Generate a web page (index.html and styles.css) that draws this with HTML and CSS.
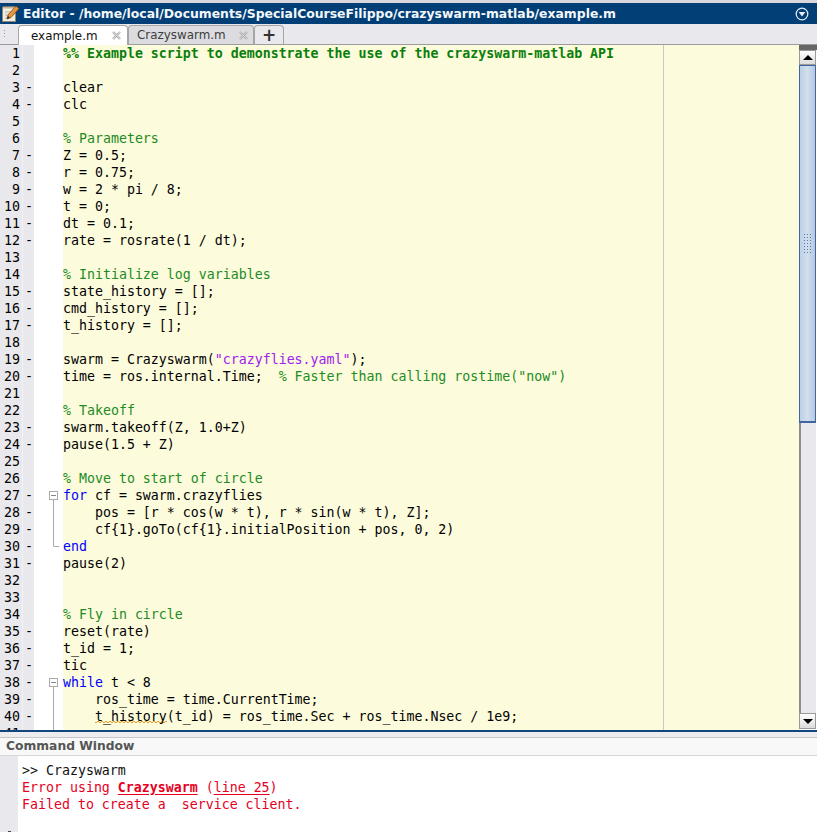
FILE: index.html
```html
<!DOCTYPE html>
<html lang="en">
<head>
<meta charset="utf-8">
<title>Editor</title>
<link rel="stylesheet" href="styles.css">
</head>
<body>
<div class="window">
  <header class="titlebar">
    <svg class="app-icon" width="17" height="19" viewBox="0 0 17 19"><rect x=".5" y="3.5" width="13" height="14" fill="#f1ede0" stroke="#8f8778"/><path d="M1 3.5h12" stroke="#c9b48c" stroke-width="2"/><path d="M3 8h6M3 11h4M3 14h3" stroke="#b5ad98"/><path d="M5 15l1-4 8-9 3 2.500-8 9z" fill="#e9963c" stroke="#6e4520" stroke-width=".8"/><path d="M5 15l1-3 2 1.600z" fill="#3a2a18"/></svg>
    <span class="title-text">Editor - /home/local/Documents/SpecialCourseFilippo/crazyswarm-matlab/example.m</span>
    <svg class="title-menu" width="14" height="14" viewBox="0 0 14 14"><circle cx="7" cy="7" r="5.800" fill="none" stroke="#e8eef5" stroke-width="1.200"/><path d="M3.600 5h6.800L7 9.600z" fill="#e8eef5"/></svg>
  </header>
  <nav class="tabbar">
    <span class="grip"></span>
    <div class="tab active"><span class="tab-label">example.m</span><svg class="tab-close" width="9" height="9" viewBox="0 0 9 9"><path d="M1 1l7 7M8 1L1 8" stroke="#aeaeae" stroke-width="2.400"/><path d="M1 1l7 7M8 1L1 8" stroke="#ececec" stroke-width=".7"/></svg></div>
    <div class="tab second"><span class="tab-label">Crazyswarm.m</span><svg class="tab-close" width="9" height="9" viewBox="0 0 9 9"><path d="M1 1l7 7M8 1L1 8" stroke="#aeaeae" stroke-width="2.400"/><path d="M1 1l7 7M8 1L1 8" stroke="#e4e4e4" stroke-width=".7"/></svg></div>
    <div class="tab add">+</div>
  </nav>
  <main class="editor">
    <div class="lines">
      <div class="line"><span class="num">1</span><span class="dash"></span><span class="fold"></span><span class="code cm-b">%% Example script to demonstrate the use of the crazyswarm-matlab API</span></div>
      <div class="line"><span class="num">2</span><span class="dash"></span><span class="fold"></span><span class="code"></span></div>
      <div class="line"><span class="num">3</span><span class="dash">-</span><span class="fold"></span><span class="code">clear</span></div>
      <div class="line"><span class="num">4</span><span class="dash">-</span><span class="fold"></span><span class="code">clc</span></div>
      <div class="line"><span class="num">5</span><span class="dash"></span><span class="fold"></span><span class="code"></span></div>
      <div class="line"><span class="num">6</span><span class="dash"></span><span class="fold"></span><span class="code cm">% Parameters</span></div>
      <div class="line"><span class="num">7</span><span class="dash">-</span><span class="fold"></span><span class="code">Z = 0.5;</span></div>
      <div class="line"><span class="num">8</span><span class="dash">-</span><span class="fold"></span><span class="code">r = 0.75;</span></div>
      <div class="line"><span class="num">9</span><span class="dash">-</span><span class="fold"></span><span class="code">w = 2 * pi / 8;</span></div>
      <div class="line"><span class="num">10</span><span class="dash">-</span><span class="fold"></span><span class="code">t = 0;</span></div>
      <div class="line"><span class="num">11</span><span class="dash">-</span><span class="fold"></span><span class="code">dt = 0.1;</span></div>
      <div class="line"><span class="num">12</span><span class="dash">-</span><span class="fold"></span><span class="code">rate = rosrate(1 / dt);</span></div>
      <div class="line"><span class="num">13</span><span class="dash"></span><span class="fold"></span><span class="code"></span></div>
      <div class="line"><span class="num">14</span><span class="dash"></span><span class="fold"></span><span class="code cm">% Initialize log variables</span></div>
      <div class="line"><span class="num">15</span><span class="dash">-</span><span class="fold"></span><span class="code">state_history = [];</span></div>
      <div class="line"><span class="num">16</span><span class="dash">-</span><span class="fold"></span><span class="code">cmd_history = [];</span></div>
      <div class="line"><span class="num">17</span><span class="dash">-</span><span class="fold"></span><span class="code">t_history = [];</span></div>
      <div class="line"><span class="num">18</span><span class="dash"></span><span class="fold"></span><span class="code"></span></div>
      <div class="line"><span class="num">19</span><span class="dash">-</span><span class="fold"></span><span class="code">swarm = Crazyswarm(<span class="str">"crazyflies.yaml"</span>);</span></div>
      <div class="line"><span class="num">20</span><span class="dash">-</span><span class="fold"></span><span class="code">time = ros.internal.Time;  <span class="cm">% Faster than calling rostime("now")</span></span></div>
      <div class="line"><span class="num">21</span><span class="dash"></span><span class="fold"></span><span class="code"></span></div>
      <div class="line"><span class="num">22</span><span class="dash"></span><span class="fold"></span><span class="code cm">% Takeoff</span></div>
      <div class="line"><span class="num">23</span><span class="dash">-</span><span class="fold"></span><span class="code">swarm.takeoff(Z, 1.0+Z)</span></div>
      <div class="line"><span class="num">24</span><span class="dash">-</span><span class="fold"></span><span class="code">pause(1.5 + Z)</span></div>
      <div class="line"><span class="num">25</span><span class="dash"></span><span class="fold"></span><span class="code"></span></div>
      <div class="line"><span class="num">26</span><span class="dash"></span><span class="fold"></span><span class="code cm">% Move to start of circle</span></div>
      <div class="line"><span class="num">27</span><span class="dash">-</span><span class="fold"><svg class="fold-mark" width="29" height="17" viewBox="0 0 29 17"><path d="M19.500 12.500V17" stroke="#aaa" fill="none"/><rect x="15.500" y="4.500" width="8" height="8" fill="#fff" stroke="#aaa"/><path d="M17 8.500h5" stroke="#888"/></svg></span><span class="code"><span class="kw">for</span> cf = swarm.crazyflies</span></div>
      <div class="line"><span class="num">28</span><span class="dash">-</span><span class="fold"><svg class="fold-mark" width="29" height="17" viewBox="0 0 29 17"><path d="M19.500 0V17" stroke="#aaa" fill="none"/></svg></span><span class="code">    pos = [r * cos(w * t), r * sin(w * t), Z];</span></div>
      <div class="line"><span class="num">29</span><span class="dash">-</span><span class="fold"><svg class="fold-mark" width="29" height="17" viewBox="0 0 29 17"><path d="M19.500 0V17" stroke="#aaa" fill="none"/></svg></span><span class="code">    cf{1}.goTo(cf{1}.initialPosition + pos, 0, 2)</span></div>
      <div class="line"><span class="num">30</span><span class="dash">-</span><span class="fold"><svg class="fold-mark" width="29" height="17" viewBox="0 0 29 17"><path d="M19.500 0V8.500H25" stroke="#aaa" fill="none"/></svg></span><span class="code"><span class="kw">end</span></span></div>
      <div class="line"><span class="num">31</span><span class="dash">-</span><span class="fold"></span><span class="code">pause(2)</span></div>
      <div class="line"><span class="num">32</span><span class="dash"></span><span class="fold"></span><span class="code"></span></div>
      <div class="line"><span class="num">33</span><span class="dash"></span><span class="fold"></span><span class="code"></span></div>
      <div class="line"><span class="num">34</span><span class="dash"></span><span class="fold"></span><span class="code cm">% Fly in circle</span></div>
      <div class="line"><span class="num">35</span><span class="dash">-</span><span class="fold"></span><span class="code">reset(rate)</span></div>
      <div class="line"><span class="num">36</span><span class="dash">-</span><span class="fold"></span><span class="code">t_id = 1;</span></div>
      <div class="line"><span class="num">37</span><span class="dash">-</span><span class="fold"></span><span class="code">tic</span></div>
      <div class="line"><span class="num">38</span><span class="dash">-</span><span class="fold"><svg class="fold-mark" width="29" height="17" viewBox="0 0 29 17"><path d="M19.500 12.500V17" stroke="#aaa" fill="none"/><rect x="15.500" y="4.500" width="8" height="8" fill="#fff" stroke="#aaa"/><path d="M17 8.500h5" stroke="#888"/></svg></span><span class="code"><span class="kw">while</span> t &lt; 8</span></div>
      <div class="line"><span class="num">39</span><span class="dash">-</span><span class="fold"><svg class="fold-mark" width="29" height="17" viewBox="0 0 29 17"><path d="M19.500 0V17" stroke="#aaa" fill="none"/></svg></span><span class="code">    ros_time = time.CurrentTime;</span></div>
      <div class="line"><span class="num">40</span><span class="dash">-</span><span class="fold"><svg class="fold-mark" width="29" height="17" viewBox="0 0 29 17"><path d="M19.500 0V17" stroke="#aaa" fill="none"/></svg></span><span class="code">    <span class="warn">t_history</span>(t_id) = ros_time.Sec + ros_time.Nsec / 1e9;</span></div>
      <div class="line partial"><span class="num">41</span><span class="dash">-</span><span class="fold"><svg class="fold-mark" width="29" height="17" viewBox="0 0 29 17"><path d="M19.500 0V17" stroke="#aaa" fill="none"/></svg></span><span class="code"></span></div>
    </div>
    <aside class="scrollbar">
      <div class="sb-cap"></div>
      <div class="sb-btn"><span class="arrow up"></span></div>
      <div class="sb-thumb"><span class="sb-grip"></span></div>
      <div class="sb-track"></div>
      <div class="sb-btn bottom"><span class="arrow down"></span></div>
    </aside>
  </main>
  <section class="command">
    <div class="cmd-strip"></div>
    <div class="cmd-head">Command Window</div>
    <div class="cmd-body">
      <div class="cmd-gutter"><span class="cmd-mark"></span></div>
      <div class="cmd-text">
        <div class="cmd-line">&gt;&gt; Crazyswarm</div>
        <div class="cmd-line err">Error using <a class="err-link">Crazyswarm</a> (<span class="err-under">line 25</span>)</div>
        <div class="cmd-line err">Failed to create a  service client.</div>
      </div>
    </div>
  </section>
</div>
</body>
</html>
```

FILE: styles.css
```css
* { box-sizing: border-box; }
html, body { margin: 0; padding: 0; }
body { width: 817px; height: 832px; overflow: hidden; background: #fff; }
.window { display: flex; flex-direction: column; height: 832px; font-family: "DejaVu Sans", sans-serif; }

.titlebar { height: 24px; flex: none; display: flex; align-items: center; padding: 0 8px 0 2px; background: #023f76; border-top: 3px solid #d9d8dc; gap: 4px; }
.app-icon { flex: none; }
.title-text { flex: 1; font-size: 12.4px; font-weight: 700; color: #f4f7fa; white-space: pre; }
.title-menu { flex: none; }

.tabbar { height: 21px; flex: none; display: flex; align-items: flex-end; background: #e9e8ed; border-bottom: 1px solid #9c9c9c; padding-left: 3px; }
.grip { width: 3px; height: 10px; margin: 0 12px 5px 0; background-image: radial-gradient(#9a9a9a 1px, transparent 1px); background-size: 3px 3px; }
.tab { height: 19px; display: flex; align-items: center; border: 1px solid #a6a6a6; border-bottom: none; border-radius: 4px 4px 0 0; font-size: 11.9px; }
.tab.active { width: 110px; height: 20px; margin-bottom: -1px; padding: 0 6px 0 12px; background: #fff; color: #111; }
.tab.second { width: 126px; padding: 0 5px 0 8px; background: #dcdce0; color: #3c3c3c; }
.tab-label { flex: 1; white-space: pre; }
.tab-close { flex: none; }
.tab.add { width: 30px; justify-content: center; background: #e9e8ed; font-size: 17px; font-weight: 700; color: #333; }

.editor { height: 685px; flex: none; display: flex; overflow: hidden; }
.lines { flex: 1; min-width: 0; overflow: hidden; }
.line { display: flex; height: 17px; font-family: "DejaVu Sans Mono", monospace; font-size: 13.28px; line-height: 17px; color: #000; }
.line.partial { height: 5px; overflow: hidden; }
.num { width: 22px; flex: none; padding-right: 2px; text-align: right; background: #e9e8ed; }
.dash { width: 12px; flex: none; padding-left: 2px; background: #e9e8ed; border-left: 1px solid #f2f1f4; }
.fold { width: 29px; flex: none; background: #fff; }
.fold-mark { display: block; }
.code { flex: 1; white-space: pre; background: linear-gradient(to right, transparent 600px, #c9c9c6 600px, #c9c9c6 601px, transparent 601px), #fcfbdc; }
.cm { color: #228b22; }
.cm-b { color: #0b7f0b; font-weight: 700; }
.kw { color: #0000ff; }
.str { color: #a020f0; }
.warn { background-image: linear-gradient(to right, #ee9a20 50%, transparent 50%), linear-gradient(to right, #ee9a20 50%, transparent 50%); background-size: 4px 1px; background-repeat: repeat-x; background-position: 0 13px, 2px 12px; }

.scrollbar { width: 18px; flex: none; display: flex; flex-direction: column; padding: 0 1px 1px 0; background: #fff; }
.sb-cap { height: 5px; background: #666; flex: none; margin-right: -1px; }
.sb-btn { height: 15px; flex: none; display: flex; align-items: center; justify-content: center; background: linear-gradient(#fff, #dcdcdc); border: 1px solid #9a9a9a; }
.sb-btn.bottom { height: 16px; }
.arrow { width: 0; height: 0; border-left: 5px solid transparent; border-right: 5px solid transparent; }
.arrow.up { border-bottom: 5px solid #000; }
.arrow.down { border-top: 5px solid #000; }
.sb-thumb { height: 358px; flex: none; display: flex; align-items: center; justify-content: center; background: linear-gradient(to right, #bcd0e6, #d2dfee 50%, #b4c8e0); border: 1px solid #3f66a0; border-width: 1px 1px 2px; }
.sb-grip { width: 10px; height: 22px; background-image: radial-gradient(#4f78b4 .8px, transparent 1px); background-size: 3px 3px; }
.sb-track { flex: 1; background: #e9e8ed; border-left: 2px solid #8e8e8e; }

.command { flex: 1; display: flex; flex-direction: column; border-top: 2px solid #11467f; }
.cmd-strip { height: 6px; flex: none; background: #ededf0; border-bottom: 1px solid #c8c6cb; }
.cmd-head { height: 18px; flex: none; padding-left: 6px; background: #f8f8f8; border-bottom: 1px solid #d6d6d6; font-size: 12.3px; line-height: 17px; font-weight: 700; color: #555; }
.cmd-body { flex: 1; display: flex; }
.cmd-gutter { width: 18px; flex: none; display: flex; align-items: flex-end; padding-left: 8px; background: #e9e8ed; }
.cmd-mark { width: 3px; height: 1px; background: #444; }
.cmd-text { flex: 1; padding: 6px 0 0 4px; font-family: "DejaVu Sans Mono", monospace; font-size: 13.28px; line-height: 17px; color: #111; }
.cmd-line { white-space: pre; height: 17px; }
.err { color: #e6001e; }
.err-link { font-weight: 700; text-decoration: underline; text-underline-offset: 2px; }
.err-under { text-decoration: underline; text-underline-offset: 2px; }
```
